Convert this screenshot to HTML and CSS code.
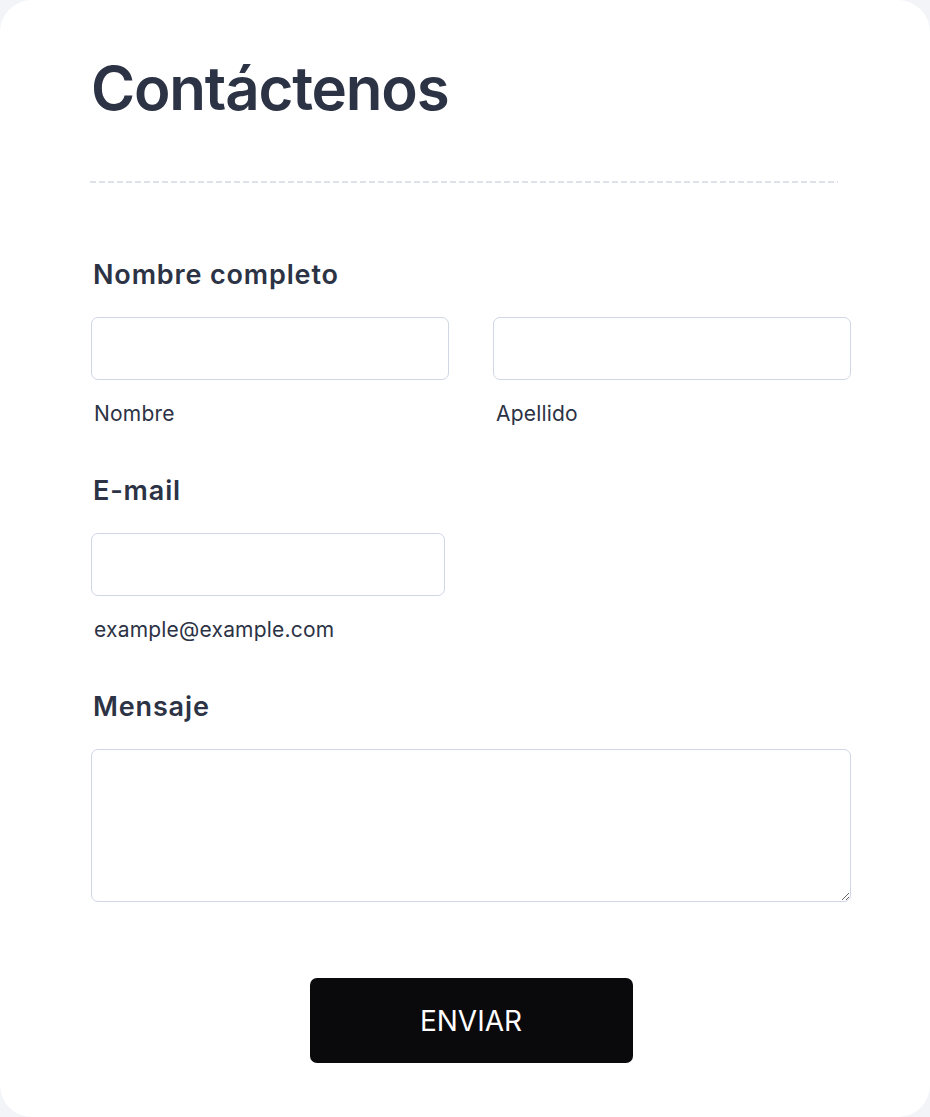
FILE: index.html
```html
<!DOCTYPE html>
<html lang="es">
<head>
    <meta charset="UTF-8">
    <meta name="viewport" content="width=device-width, initial-scale=1.0">
    <title>Contáctenos</title>
    <link rel="stylesheet" href="styles.css">
</head>
<body>
    <div class="card">
        <h1 class="title">Contáctenos</h1>
        <div class="divider"></div>

        <form class="form" onsubmit="return false">
            <div class="field">
                <label class="label">Nombre completo</label>
                <div class="row">
                    <div class="sub">
                        <input type="text" class="input" id="first">
                        <label class="hint" for="first">Nombre</label>
                    </div>
                    <div class="sub">
                        <input type="text" class="input" id="last">
                        <label class="hint" for="last">Apellido</label>
                    </div>
                </div>
            </div>

            <div class="field">
                <label class="label" for="email">E-mail</label>
                <div class="sub email">
                    <input type="email" class="input" id="email">
                    <span class="hint">example@example.com</span>
                </div>
            </div>

            <div class="field">
                <label class="label" for="msg">Mensaje</label>
                <textarea class="input message" id="msg"></textarea>
            </div>

            <div class="actions">
                <button type="submit" class="submit">ENVIAR</button>
            </div>
        </form>
    </div>
</body>
</html>
```

FILE: styles.css
```css
* { box-sizing: border-box; }

body {
    margin: 0;
    background-color: #f3f4f8;
    font-family: Inter, "Noto Sans", sans-serif;
    color: #2c3345;
}

.card {
    background: #fff;
    min-height: 100vh;
    border-radius: 32px;
    padding: 52px 79px 40px 91px;
}

.title {
    margin: 0;
    font-size: 60px;
    line-height: 72px;
    font-weight: 600;
    letter-spacing: -1.2px;
    color: #2c3345;
}

.divider {
    width: 748px;
    height: 2px;
    margin: 57px 0 0 -1px;
    background-image: repeating-linear-gradient(90deg, #dde1ea 0 6px, transparent 6px 9px);
}

.form {
    margin-top: 76px;
}

.field {
    margin-bottom: 48px;
}

.label {
    display: block;
    font-size: 27px;
    line-height: 32px;
    font-weight: 600;
    letter-spacing: 0.85px;
    padding-left: 2px;
    margin-bottom: 26px;
}

.row {
    display: flex;
    gap: 44px;
}

.sub {
    display: flex;
    flex-direction: column;
    width: 358px;
}

.sub.email { width: 354px; }

.input {
    width: 100%;
    height: 63px;
    border: 1.5px solid #cfd6e4;
    border-radius: 7px;
    background: #fff;
    font-family: inherit;
    font-size: 20px;
    padding: 0 14px;
    outline: none;
}

.hint {
    margin-top: 21px;
    padding-left: 3px;
    font-size: 21px;
    line-height: 26px;
    letter-spacing: 0.2px;
    color: #2c3345;
}

.message {
    display: block;
    width: 760px;
    height: 153px;
    resize: both;
    padding: 12px 14px;
}

.actions {
    display: flex;
    justify-content: center;
    width: 760px;
    margin-top: 76px;
}

.submit {
    width: 323px;
    height: 85px;
    background-color: #0a0a0d;
    color: #fff;
    border: none;
    border-radius: 7px;
    font-family: inherit;
    font-size: 28px;
    font-weight: 400;
    cursor: pointer;
}

.submit:hover { background-color: #22252c; }
```
